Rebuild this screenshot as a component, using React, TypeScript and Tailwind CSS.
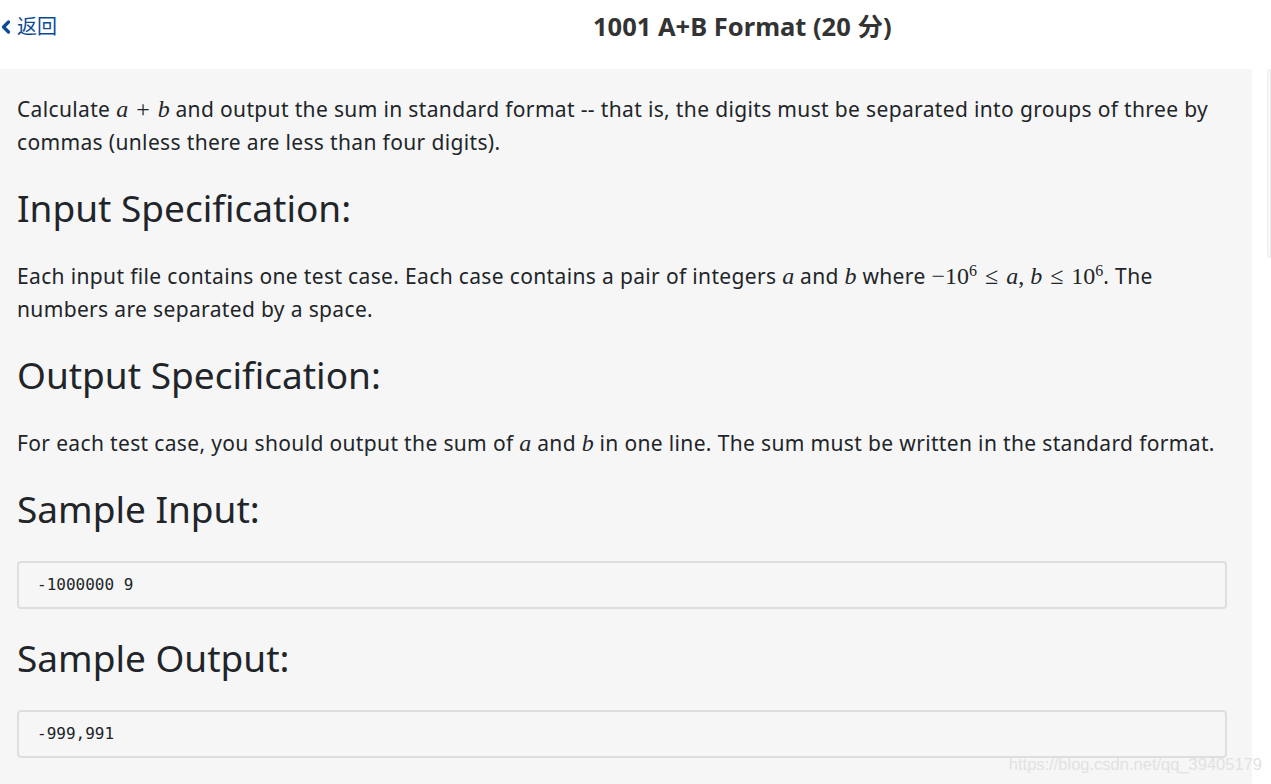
import { ChevronLeft } from "lucide-react";

const mathFont = { fontFamily: '"Liberation Serif", "DejaVu Serif", serif' };

function V({ children }: { children: React.ReactNode }) {
  return (
    <span className="italic text-[24px] tracking-normal" style={mathFont}>
      {children}
    </span>
  );
}

function Op({ children }: { children: React.ReactNode }) {
  return (
    <span className="text-[24px] mx-[8px] tracking-normal" style={mathFont}>
      {children}
    </span>
  );
}

function Heading({ children }: { children: React.ReactNode }) {
  return <h2 className="text-[37px] leading-[46px] tracking-normal text-[#212529] mt-[26px] mb-[29px]">{children}</h2>;
}

function Code({ children }: { children: React.ReactNode }) {
  return (
    <pre className="font-['DejaVu_Sans_Mono','Liberation_Mono',monospace] text-[16px] leading-[24px] tracking-normal text-[#212529] border-2 border-[#dedede] rounded-[4px] bg-[#f6f6f6] px-[18px] py-[10px] mr-[8px] mb-[5px]">
      {children}
    </pre>
  );
}

export default function App() {
  return (
    <div className="relative w-[1271px] h-[784px] overflow-hidden bg-white font-['Noto_Sans','Noto_Sans_CJK_SC',sans-serif] text-[#212529]">
      <header className="flex items-center h-[69px] pb-[16px]">
        <a className="flex items-center text-[20px] text-[#0d4a94] w-[560px]">
          <ChevronLeft className="w-[20px] h-[20px] -ml-[4px]" strokeWidth={4} />
          <span className="ml-[1px]">返回</span>
        </a>
        <h1 className="text-[25.5px] font-bold text-[#333] ml-[33px]">1001 A+B Format (20 分)</h1>
      </header>
      <div className="flex">
        <main className="w-[1252px] bg-[#f6f6f6] pl-[17px] pr-[17px] pt-[24px] pb-[40px] text-[21px] leading-[33px] tracking-[0.35px]">
          <p>
            Calculate <V>a</V>
            <Op>+</Op>
            <V>b</V> and output the sum in standard format -- that is, the digits must be separated into groups of
            three by commas (unless there are less than four digits).
          </p>
          <Heading>Input Specification:</Heading>
          <p>
            Each input file contains one test case. Each case contains a pair of integers <V>a</V> and <V>b</V> where{" "}
            <span className="text-[24px] tracking-normal" style={mathFont}>
              −10<sup className="text-[16px]">6</sup>
              <span className="mx-[8px]">≤</span>
              <i>a</i>, <i>b</i>
              <span className="mx-[8px]">≤</span>
              10<sup className="text-[16px]">6</sup>
            </span>
            . The numbers are separated by a space.
          </p>
          <Heading>Output Specification:</Heading>
          <p>
            For each test case, you should output the sum of <V>a</V> and <V>b</V> in one line. The sum must be written
            in the standard format.
          </p>
          <Heading>Sample Input:</Heading>
          <Code>-1000000 9</Code>
          <Heading>Sample Output:</Heading>
          <Code>-999,991</Code>
        </main>
        <aside className="flex-1 pl-[15px]">
          <div className="h-[189px] rounded-l-[6px] border border-[#eee] bg-[#f8f8f8]" />
        </aside>
      </div>
      <div className="absolute right-[9px] bottom-[7px] text-[16.5px] text-[#e2e2e2] font-['Liberation_Sans',sans-serif]">
        https://blog.csdn.net/qq_39405179
      </div>
    </div>
  );
}
